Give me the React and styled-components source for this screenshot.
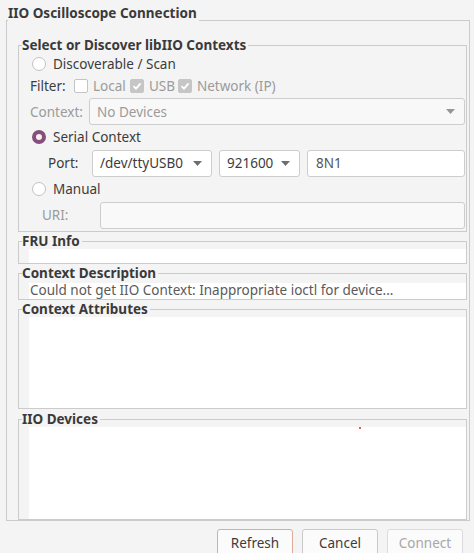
import styled, { createGlobalStyle } from "styled-components"

const GlobalStyle = createGlobalStyle`
    html, body {
        margin: 0;
        padding: 0;
        background: #f4f4f4;
        overflow: hidden;
    }
    body {
        font-family: "Noto Sans", "Open Sans", sans-serif;
        font-size: 13.5px;
        color: #3c3c3c;
    }
    * { box-sizing: border-box; }
`

function Arrow() {
    return (
        <svg width="9" height="5" viewBox="0 0 9 5">
            <path d="M0 0 L9 0 L4.5 5 Z" fill="#6e6e6e" />
        </svg>
    )
}

function Check() {
    return (
        <svg width="10" height="10" viewBox="0 0 10 10">
            <path d="M1.5 5.2 L4 7.6 L8.6 2.4" fill="none" stroke="#fff" strokeWidth="1.8" />
        </svg>
    )
}

export default function App() {
    return (
        <Window>
            <GlobalStyle />
            <Outer>
                <Legend $ml={1} $pb={14}>IIO Oscilloscope Connection</Legend>

                <Select>
                    <Legend $ml={3}>Select or Discover libIIO Contexts</Legend>

                    <Row $h={21} $pl={13}>
                        <Radio />
                        <span>Discoverable / Scan</span>
                    </Row>

                    <Row $h={24} $pl={11}>
                        <Label $w={44}>Filter:</Label>
                        <Box />
                        <Muted $w={37}>Local</Muted>
                        <Box $on><Check /></Box>
                        <Muted $w={29}>USB</Muted>
                        <Box $on><Check /></Box>
                        <Muted>Network (IP)</Muted>
                    </Row>

                    <Row $h={27} $pl={11}>
                        <Label $w={59} $dim>Context:</Label>
                        <Combo $disabled $grow>
                            <span>No Devices</span>
                            <Arrow />
                        </Combo>
                    </Row>

                    <Row $h={24} $pl={13}>
                        <Radio $on />
                        <span>Serial Context</span>
                    </Row>

                    <Row $h={28} $pl={29}>
                        <Label $w={44}>Port:</Label>
                        <Combo $w={120}>
                            <span>/dev/ttyUSB0</span>
                            <Arrow />
                        </Combo>
                        <Combo $w={81}>
                            <span>921600</span>
                            <Arrow />
                        </Combo>
                        <Field $grow>8N1</Field>
                    </Row>

                    <Row $h={24} $pl={13}>
                        <Radio />
                        <span>Manual</span>
                    </Row>

                    <Row $h={28} $pl={23}>
                        <Label $w={58} $dim>URI:</Label>
                        <Field $grow $disabled />
                    </Row>
                </Select>

                <Section $mt={1}>
                    <Legend $ml={3}>FRU Info</Legend>
                    <Pane $h={14} />
                </Section>

                <Section $mt={1}>
                    <Legend $ml={3}>Context Description</Legend>
                    <Pane $h={16}>
                        <Message>Could not get IIO Context: Inappropriate ioctl for device...</Message>
                    </Pane>
                </Section>

                <Section $mt={1}>
                    <Legend $ml={3}>Context Attributes</Legend>
                    <Pane $h={91} />
                </Section>

                <Section $mt={2}>
                    <Legend $ml={3}>IIO Devices</Legend>
                    <Pane $h={92}>
                        <Dot />
                    </Pane>
                </Section>
            </Outer>

            <Buttons>
                <Button $focus>Refresh</Button>
                <Button>Cancel</Button>
                <Button $disabled>Connect</Button>
            </Buttons>
        </Window>
    )
}

const Window = styled.div`
    height: 553px;
    padding: 5px 0 0 6px;
    display: flex;
    flex-direction: column;
`

const Outer = styled.fieldset`
    width: 464px;
    margin: 0;
    padding: 0;
    border: 1px solid #cbcbcb;
    min-width: 0;
`

const Legend = styled.legend`
    font-weight: bold;
    font-size: 13.5px;
    line-height: 16px;
    color: #3a3a3a;
    margin-left: ${p => p.$ml || 0}px;
    padding: 0 2px ${p => p.$pb || 0}px 0;
`

const Select = styled.fieldset`
    margin: 2px 2px 0 11px;
    padding: 0 0 2px 0;
    border: 1px solid #cbcbcb;
    min-width: 0;
    display: flex;
    flex-direction: column;
`

const Row = styled.div`
    height: ${p => p.$h}px;
    padding-left: ${p => p.$pl}px;
    display: flex;
    align-items: center;

    > span {
        margin-left: 7px;
    }
`

const Label = styled.div`
    width: ${p => p.$w}px;
    flex-shrink: 0;
    color: ${p => p.$dim ? "#9b9b9b" : "#3c3c3c"};
`

const Muted = styled.div`
    color: #9b9b9b;
    margin-left: 5px;
    width: ${p => p.$w ? `${p.$w}px` : "auto"};
`

const Radio = styled.div`
    width: 14px;
    height: 14px;
    border-radius: 50%;
    flex-shrink: 0;
    background: ${p => p.$on ? "#f6eff4" : "#ffffff"};
    border: ${p => p.$on ? "4px solid #864f7b" : "1px solid #c2c2c2"};
`

const Box = styled.div`
    width: 14px;
    height: 14px;
    border-radius: 2px;
    flex-shrink: 0;
    display: flex;
    align-items: center;
    justify-content: center;
    background: ${p => p.$on ? "#c6c6c6" : "#ffffff"};
    border: 1px solid ${p => p.$on ? "#c6c6c6" : "#c4c4c4"};
`

const Combo = styled.div`
    height: 27px;
    width: ${p => p.$w ? `${p.$w}px` : "auto"};
    flex: ${p => p.$grow ? 1 : "none"};
    margin-right: ${p => p.$grow ? 1 : 7}px;
    padding: 0 9px 0 7px;
    display: flex;
    align-items: center;
    justify-content: space-between;
    border: 1px solid #cdcdcd;
    border-radius: 3px;
    background: ${p => p.$disabled ? "#f8f8f8" : "#ffffff"};
    color: ${p => p.$disabled ? "#9b9b9b" : "#3c3c3c"};

    svg {
        opacity: ${p => p.$disabled ? 0.7 : 1};
    }
`

const Field = styled.div`
    height: 27px;
    flex: ${p => p.$grow ? 1 : "none"};
    margin-right: 1px;
    padding: 0 8px;
    display: flex;
    align-items: center;
    border: 1px solid #cdcdcd;
    border-radius: 3px;
    background: ${p => p.$disabled ? "#f9f9f9" : "#ffffff"};
    color: #555555;
`

const Section = styled.fieldset`
    margin: ${p => p.$mt}px 2px 0 11px;
    padding: 0;
    border: 1px solid #cbcbcb;
    min-width: 0;
`

const Pane = styled.div`
    position: relative;
    height: ${p => p.$h}px;
    margin-left: 10px;
    background: #ffffff;
`

const Message = styled.div`
    line-height: 14px;
    margin-top: 2px;
    padding-left: 1px;
    color: #5a5a5a;
    white-space: nowrap;
`

const Dot = styled.div`
    position: absolute;
    left: 330px;
    top: 0px;
    width: 2px;
    height: 2px;
    border-radius: 50%;
    background: #d8262b;
`

const Buttons = styled.div`
    display: flex;
    justify-content: flex-end;
    gap: 9px;
    padding-right: 11px;
    margin-top: 8px;
`

const Button = styled.button`
    width: 76px;
    height: 28px;
    padding: 0;
    font-family: inherit;
    font-size: 13.5px;
    border-radius: 3px;
    background: #fbfbfb;
    border: 1px solid ${p => p.$focus ? "#deab96" : p.$disabled ? "#dcdcdc" : "#c9c9c9"};
    color: ${p => p.$disabled ? "#a8a8a8" : "#3c3c3c"};
`
